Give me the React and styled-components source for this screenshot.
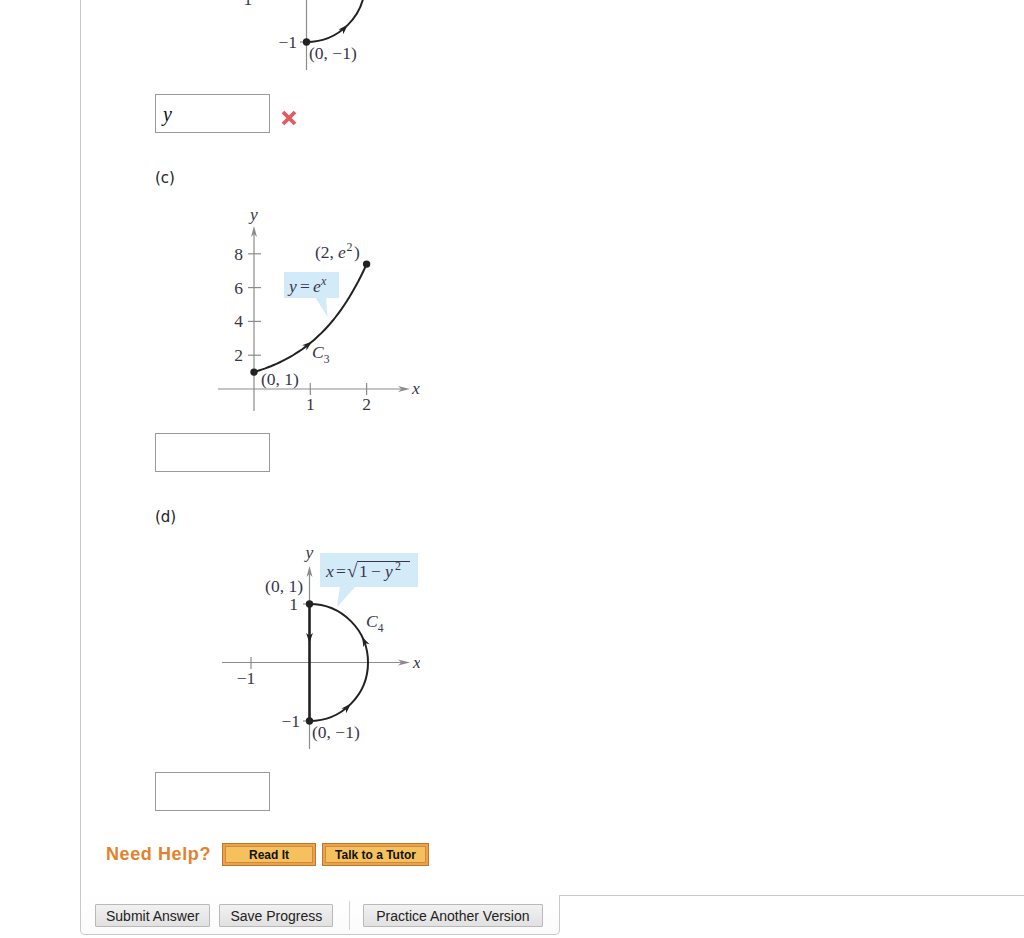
import React from "react";
import styled, { createGlobalStyle } from "styled-components";

const GlobalStyle = createGlobalStyle`
  html, body {
    margin: 0;
    padding: 0;
    background: #fff;
  }
  body {
    font-family: "Liberation Sans", Arial, sans-serif;
  }
`;

const ink = "#222";
const axisGrey = "#8c8c8c";
const labelInk = "#36364a";
const calloutBlue = "#d3ebf8";

// Mise en page
const Page = styled.div`
  width: 1024px;
  height: 938px;
  overflow: hidden;
  display: flex;
  flex-direction: column;
`;

const Panel = styled.div`
  margin-left: 80px;
  border-left: 1px solid #c9c9c9;
  padding-bottom: 29px;
  display: flex;
  flex-direction: column;
`;

const QuestionBody = styled.div`
  padding-left: 74px;
  display: flex;
  flex-direction: column;
  align-items: flex-start;
`;

const Figure = styled.svg`
  display: block;
  margin-left: 60px;
  margin-top: ${(p) => p.$mt || 0}px;
  overflow: hidden;
  font-family: "Liberation Serif", "Times New Roman", serif;
`;

const AnswerRow = styled.div`
  display: flex;
  align-items: center;
  margin-top: ${(p) => p.$mt || 0}px;
`;

const AnswerBox = styled.div`
  box-sizing: border-box;
  width: 115px;
  height: 39px;
  border: 1px solid #9a9a9a;
  background: #fff;
  display: flex;
  align-items: center;
  padding-left: 7px;
`;

const MathVar = styled.span`
  font-family: "Liberation Serif", "Times New Roman", serif;
  font-style: italic;
  font-size: 20px;
  color: #111;
  margin-top: 2px;
`;

const WrongMark = styled.svg`
  margin-left: 10px;
  margin-top: 8px;
`;

const PartLabel = styled.div`
  font-family: "DejaVu Sans", Verdana, sans-serif;
  font-size: 15px;
  line-height: 20px;
  color: #222;
  margin-top: ${(p) => p.$mt || 0}px;
`;

const HelpRow = styled.div`
  display: flex;
  align-items: center;
  padding-left: 25px;
  margin-top: 32px;
  height: 23px;
`;

const HelpLabel = styled.span`
  font-family: "Liberation Sans", Arial, sans-serif;
  font-weight: bold;
  font-size: 18px;
  letter-spacing: 0.6px;
  color: #e3822d;
  margin-right: 11px;
`;

const HelpButton = styled.button`
  box-sizing: border-box;
  height: 23px;
  min-width: 94px;
  padding: 0 12px;
  margin-right: 6px;
  border: 1px solid #c27726;
  background: #f5c15e;
  box-shadow: inset 0 0 0 2px #eca24a, inset 0 0 0 3px #cf8a3c;
  font-family: "Liberation Sans", Arial, sans-serif;
  font-weight: bold;
  font-size: 12px;
  color: #111;
  cursor: pointer;
`;

const FooterRow = styled.div`
  display: flex;
  margin-left: 80px;
`;

const ButtonTab = styled.div`
  box-sizing: border-box;
  width: 480px;
  height: 40px;
  border: 1px solid #c9c9c9;
  border-top: none;
  border-radius: 0 0 5px 5px;
  padding: 9px 0 0 14px;
  display: flex;
  align-items: flex-start;
  background: linear-gradient(#fff, #fbfbfb);
`;

const FooterFill = styled.div`
  flex: 1;
  border-top: 1px solid #c9c9c9;
`;

const ActionButton = styled.button`
  box-sizing: border-box;
  height: 23px;
  padding: 0 ${(p) => p.$px || 10}px;
  margin-right: ${(p) => p.$mr || 0}px;
  border: 1px solid #b9b9b9;
  border-radius: 1px;
  background: linear-gradient(#f1f1f1, #e1e1e1);
  font-family: "Liberation Sans", Arial, sans-serif;
  font-size: 14px;
  color: #222;
  cursor: pointer;
`;

const Divider = styled.div`
  width: 1px;
  height: 29px;
  margin: -3px 13px 0 16px;
  background: #d2d2d2;
`;

// Dessins
const Arrowhead = ({ x, y, angle, color = ink, len = 10, half = 3.4 }) => (
  <path
    d={`M0 0 L${-len} ${-half} L${-len * 0.72} 0 L${-len} ${half} Z`}
    fill={color}
    transform={`translate(${x} ${y}) rotate(${angle})`}
  />
);

const Dot = ({ x, y }) => <circle cx={x} cy={y} r="3.7" fill={ink} />;

const expPath = (() => {
  const pts = [];
  for (let i = 0; i <= 40; i++) {
    const t = i / 20;
    pts.push(`${(254 + 56.3 * t).toFixed(1)} ${(389 - 16.9 * Math.exp(t)).toFixed(1)}`);
  }
  return "M" + pts.join(" L");
})();

const expArrowAngle = (Math.atan2(-16.9 * Math.E, 56.3) * 180) / Math.PI;

const ExpGraph = () => (
  <Figure width="205" height="212" viewBox="215 205 205 212" $mt={17}>
    <g fill={labelInk} fontSize="17.5">
      {/* axes */}
      <line x1="254" y1="411" x2="254" y2="233" stroke={axisGrey} strokeWidth="1.2" />
      <Arrowhead x={254} y={226} angle={-90} color={axisGrey} len={11} half={3} />
      <line x1="218" y1="389" x2="403" y2="389" stroke={axisGrey} strokeWidth="1.2" />
      <Arrowhead x={410} y={389} angle={0} color={axisGrey} len={12} half={3} />
      <text x="254" y="220" textAnchor="middle" fontStyle="italic">y</text>
      <text x="412" y="394" fontStyle="italic">x</text>
      {[2, 4, 6, 8].map((v) => {
        const y = 389 - v * 16.9;
        return (
          <g key={v}>
            <line x1="248" y1={y} x2="261" y2={y} stroke={axisGrey} strokeWidth="1.2" />
            <text x="243" y={y + 6} textAnchor="end">{v}</text>
          </g>
        );
      })}
      {[1, 2].map((v) => {
        const x = 254 + v * 56.3;
        return (
          <g key={v}>
            <line x1={x} y1="383" x2={x} y2="395" stroke={axisGrey} strokeWidth="1.2" />
            <text x={x} y="410" textAnchor="middle">{v}</text>
          </g>
        );
      })}

      {/* callout */}
      <rect x="284" y="272" width="55" height="26" fill={calloutBlue} />
      <polygon points="315,297 326,297 327.5,317" fill={calloutBlue} />
      <text y="292">
        <tspan x="289" fontStyle="italic">y</tspan>
        <tspan x="300">=</tspan>
        <tspan x="313" fontStyle="italic">e</tspan>
        <tspan x="321" dy="-7" fontStyle="italic" fontSize="12">x</tspan>
      </text>

      {/* curve */}
      <path d={expPath} fill="none" stroke={ink} strokeWidth="2" />
      <Arrowhead x={312} y={341.5} angle={expArrowAngle} />
      <Dot x={254} y={372.1} />
      <Dot x={366.6} y={264.1} />

      <text y="258">
        <tspan x="315">(2,</tspan>
        <tspan x="338" fontStyle="italic">e</tspan>
        <tspan x="346.5" dy="-7" fontSize="12">2</tspan>
        <tspan x="354" dy="7">)</tspan>
      </text>
      <text x="312" y="358" fontStyle="italic">
        C<tspan fontStyle="normal" fontSize="11.5" dy="5">3</tspan>
      </text>
      <text x="261" y="385">(0, 1)</text>
    </g>
  </Figure>
);

const CX = 309.5;
const CY = 662.5;
const R = 58.5;

const circleArrow = (theta) => {
  const t = (theta * Math.PI) / 180;
  const x = CX + R * Math.cos(t);
  const y = CY + R * Math.sin(t);
  const angle = (Math.atan2(-Math.cos(t), Math.sin(t)) * 180) / Math.PI;
  return { x, y, angle };
};

const SemicircleGraph = ({ closed, partial, viewX, viewY, height, mt }) => {
  const a1 = circleArrow(-26);
  const a2 = circleArrow(45);
  return (
    <Figure
      width="205"
      height={height}
      viewBox={`${viewX} ${viewY} 205 ${height}`}
      $mt={mt}
    >
      <g fill={labelInk} fontSize="17.5">
        {/* axes */}
        <line x1={CX} y1="749" x2={CX} y2="572" stroke={axisGrey} strokeWidth="1.2" />
        <line x1="222" y1={CY} x2="403" y2={CY} stroke={axisGrey} strokeWidth="1.2" />
        <line x1="251" y1="657" x2="251" y2="669" stroke={axisGrey} strokeWidth="1.2" />
        <text x="246" y="684" textAnchor="middle">−1</text>
        <line x1="303" y1="721" x2={CX} y2="721" stroke={axisGrey} strokeWidth="1.2" />
        <text x="300" y="727" textAnchor="end">−1</text>

        {!partial && (
          <>
            <Arrowhead x={CX} y={566} angle={-90} color={axisGrey} len={11} half={3} />
            <Arrowhead x={410} y={CY} angle={0} color={axisGrey} len={12} half={3} />
            <text x={CX} y="558" textAnchor="middle" fontStyle="italic">y</text>
            <text x="413" y="668" fontStyle="italic">x</text>
            <line x1="303" y1="604" x2={CX} y2="604" stroke={axisGrey} strokeWidth="1.2" />
            <text x="298" y="610" textAnchor="end">1</text>

            {/* callout */}
            <rect x="320" y="553" width="98" height="34" fill={calloutBlue} />
            <polygon points="340,586 356,586 337,607" fill={calloutBlue} />
            <text y="577">
              <tspan x="326" fontStyle="italic">x</tspan>
              <tspan x="336">=</tspan>
              <tspan x="347" fontSize="19">√</tspan>
              <tspan x="359">1</tspan>
              <tspan x="371">−</tspan>
              <tspan x="385" fontStyle="italic">y</tspan>
              <tspan x="395" dy="-7" fontSize="12">2</tspan>
            </text>
            <line x1="357" y1="561.5" x2="410" y2="561.5" stroke={labelInk} strokeWidth="1" />

            <text x="303" y="592" textAnchor="end">(0, 1)</text>
            <text x="366" y="627" fontStyle="italic">
              C<tspan fontStyle="normal" fontSize="11.5" dy="5">4</tspan>
            </text>
          </>
        )}

        {/* curve */}
        <path
          d={`M${CX} 604 A${R} ${R} 0 0 1 ${CX} 721`}
          fill="none"
          stroke={ink}
          strokeWidth="2"
        />
        <Arrowhead x={a1.x} y={a1.y} angle={a1.angle} />
        <Arrowhead x={a2.x} y={a2.y} angle={a2.angle} />
        {closed && (
          <>
            <line x1={CX} y1="604" x2={CX} y2="721" stroke={ink} strokeWidth="2.6" />
            <Arrowhead x={CX} y={643} angle={90} />
            <Dot x={CX} y={604} />
          </>
        )}
        <Dot x={CX} y={721} />
        <text x="312" y="738">(0, −1)</text>
      </g>
    </Figure>
  );
};

const WrongIcon = () => (
  <WrongMark width="18" height="18" viewBox="0 0 18 18">
    <path d="M3 3 L15 15 M15 3 L3 15" stroke="#e25c5e" strokeWidth="3.8" />
  </WrongMark>
);

const App = () => (
  <Page>
    <GlobalStyle />
    <Panel>
      <QuestionBody>
        <SemicircleGraph partial viewX={218} viewY={679} height={72} mt={0} />

        <AnswerRow $mt={22}>
          <AnswerBox>
            <MathVar>y</MathVar>
          </AnswerBox>
          <WrongIcon />
        </AnswerRow>

        <PartLabel $mt={35}>(c)</PartLabel>
        <ExpGraph />
        <AnswerRow $mt={16}>
          <AnswerBox />
        </AnswerRow>

        <PartLabel $mt={35}>(d)</PartLabel>
        <SemicircleGraph closed viewX={215} viewY={540} height={212} mt={13} />
        <AnswerRow $mt={20}>
          <AnswerBox />
        </AnswerRow>
      </QuestionBody>

      <HelpRow>
        <HelpLabel>Need Help?</HelpLabel>
        <HelpButton>Read It</HelpButton>
        <HelpButton>Talk to a Tutor</HelpButton>
      </HelpRow>
    </Panel>

    <FooterRow>
      <ButtonTab>
        <ActionButton $mr={9}>Submit Answer</ActionButton>
        <ActionButton>Save Progress</ActionButton>
        <Divider />
        <ActionButton $px={12}>Practice Another Version</ActionButton>
      </ButtonTab>
      <FooterFill />
    </FooterRow>
  </Page>
);

export default App;
